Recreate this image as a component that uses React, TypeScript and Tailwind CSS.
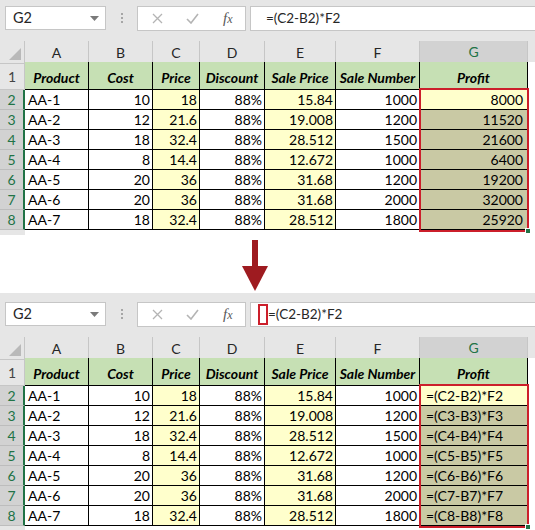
import React from 'react'

const FONT = "[font-family:Lato,'Noto_Sans',sans-serif]"
const COLS = 'grid grid-cols-[25px_64px_64px_47px_65px_71px_84px_108px_1fr]'
const LETTERS = ['A', 'B', 'C', 'D', 'E', 'F']

const HEADINGS = ['Product', 'Cost', 'Price', 'Discount', 'Sale Price', 'Sale Number', 'Profit']

const ROWS: [string, string, string, string, string, string, string][] = [
  ['AA-1', '10', '18', '88%', '15.84', '1000', '8000'],
  ['AA-2', '12', '21.6', '88%', '19.008', '1200', '11520'],
  ['AA-3', '18', '32.4', '88%', '28.512', '1500', '21600'],
  ['AA-4', '8', '14.4', '88%', '12.672', '1000', '6400'],
  ['AA-5', '20', '36', '88%', '31.68', '1200', '19200'],
  ['AA-6', '20', '36', '88%', '31.68', '2000', '32000'],
  ['AA-7', '18', '32.4', '88%', '28.512', '1800', '25920'],
]

function FormulaBar({ marker, tall }: { marker: boolean; tall: boolean }) {
  return (
    <div
      className={`flex items-start bg-[#e6e6e6] pl-[5px] ${tall ? 'h-[44px] pt-[9px]' : 'h-[41px] pt-[6px]'}`}
    >
      <div className="flex h-[24px] w-[101px] items-center justify-between border border-[#c6c6c6] bg-white pl-[7px] pr-[6px] text-[14.5px] text-[#262626]">
        <span>G2</span>
        <svg width="9" height="5" viewBox="0 0 9 5">
          <path d="M0 0 H9 L4.5 5 Z" fill="#7a7a7a" />
        </svg>
      </div>
      <div className="flex w-[31px] flex-col items-center gap-[2px] pt-[7px]">
        <span className="h-[2px] w-[2px] bg-[#a6a6a6]" />
        <span className="h-[2px] w-[2px] bg-[#a6a6a6]" />
        <span className="h-[2px] w-[2px] bg-[#a6a6a6]" />
      </div>
      <div className="flex h-[25px] w-[109px] items-center border border-[#c6c6c6] bg-white">
        <svg className="ml-[14px]" width="11" height="11" viewBox="0 0 11 11">
          <path d="M1 1 L10 10 M10 1 L1 10" stroke="#b4b4b4" strokeWidth="1.3" />
        </svg>
        <svg className="ml-[23px]" width="13" height="11" viewBox="0 0 13 11">
          <path d="M1 6 L5 10 L12 1" stroke="#b4b4b4" strokeWidth="1.6" fill="none" />
        </svg>
        <span className="ml-[24px] [font-family:'Liberation_Serif',serif] text-[15px] italic text-[#595959]">
          f<span className="text-[12px]">x</span>
        </span>
      </div>
      <div className="ml-[4px] flex h-[25px] flex-1 items-center border-y border-l border-[#c6c6c6] bg-white pl-[7px] text-[13.5px] text-[#262626]">
        {marker ? (
          <span className="h-[21px] w-[10px] border-2 border-[#cc1f2b]" />
        ) : (
          <span className="w-[8px]" />
        )}
        <span>=(C2-B2)*F2</span>
      </div>
    </div>
  )
}

function Sheet({ formulas }: { formulas: boolean }) {
  return (
    <div className="relative">
      <FormulaBar marker={formulas} tall={formulas} />
      <div className={`${COLS} h-[21px] bg-[#e6e6e6] text-[14px] text-[#262626]`}>
        <div className="relative border-r border-b border-[#c6c6c6]">
          <svg className="absolute bottom-[3px] right-[3px]" width="12" height="12" viewBox="0 0 12 12">
            <path d="M12 0 V12 H0 Z" fill="#b9b9b9" />
          </svg>
        </div>
        {LETTERS.map((l) => (
          <div key={l} className="flex items-center justify-center border-r border-b border-[#c6c6c6]">
            {l}
          </div>
        ))}
        <div className="flex items-center justify-center border-r border-r-[#c6c6c6] border-b-2 border-b-[#217346] bg-[#d2d2d2] text-[#217346]">
          G
        </div>
        <div className="border-b border-[#c6c6c6]" />
      </div>

      <div className={`${COLS} h-[28px] text-[14px]`}>
        <div className="flex items-end justify-center border-b border-r border-[#c6c6c6] bg-[#e6e6e6] pb-[2px] text-[#444]">
          1
        </div>
        {HEADINGS.map((h) => (
          <div
            key={h}
            className="flex items-end justify-center overflow-hidden whitespace-nowrap border-r border-b border-black bg-[#c6e0b4] pb-[1px] font-bold italic text-black"
          >
            {h}
          </div>
        ))}
        <div className="bg-white" />
      </div>

      {ROWS.map((r, i) => (
        <div key={r[0]} className={`${COLS} h-[20px] text-[14px] leading-[19px] text-black`}>
          <div className="flex items-end justify-center border-b border-b-[#bdbdbd] border-r-2 border-r-[#217346] bg-[#d2d2d2] text-[#217346]">
            {i + 2}
          </div>
          <div className="flex items-end border-r border-b border-black pl-[3px]">{r[0]}</div>
          <div className="flex items-end justify-end border-r border-b border-black pr-[2px]">{r[1]}</div>
          <div className="flex items-end justify-end border-r border-b border-black bg-[#ffffcc] pr-[2px]">{r[2]}</div>
          <div className="flex items-end justify-end border-r border-b border-black pr-[2px]">{r[3]}</div>
          <div className="flex items-end justify-end border-r border-b border-black bg-[#ffffcc] pr-[2px]">{r[4]}</div>
          <div className="flex items-end justify-end border-r border-b border-black pr-[2px]">{r[5]}</div>
          <div
            className={`flex items-end border-r border-b border-black ${
              i === 0 ? 'bg-[#ffffcc]' : 'bg-[#c9c9a4]'
            } ${formulas ? 'pl-[6px]' : 'justify-end pr-[4px]'}`}
          >
            {formulas ? `=(C${i + 2}-B${i + 2})*F${i + 2}` : r[6]}
          </div>
          <div className="bg-white" />
        </div>
      ))}

      <div className={`${COLS} ${formulas ? 'h-[4px]' : 'h-[5px]'}`}>
        <div className="bg-[#e6e6e6]" />
      </div>

      {/* highlight around G2:G8 */}
      <div
        className={`absolute left-[419px] w-[110px] h-[144px] border-2 border-[#cc1f2b] ${
          formulas ? 'top-[91px]' : 'top-[88px]'
        }`}
      />
      <div
        className={`absolute left-[525px] h-[6px] w-[6px] border border-white bg-[#217346] ${
          formulas ? 'top-[231px]' : 'top-[228px]'
        }`}
      />
    </div>
  )
}

export default function App() {
  return (
    <div className={`w-[535px] h-[530px] overflow-hidden bg-white ${FONT}`}>
      <Sheet formulas={false} />
      <div className="h-[58px] pt-[5px] pl-[242px]">
        <svg width="26" height="51" viewBox="0 0 26 51">
          <rect x="10" y="0" width="6" height="30" fill="#9e1b20" />
          <path d="M0 26 H26 L13 51 Z" fill="#9e1b20" />
        </svg>
      </div>
      <Sheet formulas />
    </div>
  )
}
